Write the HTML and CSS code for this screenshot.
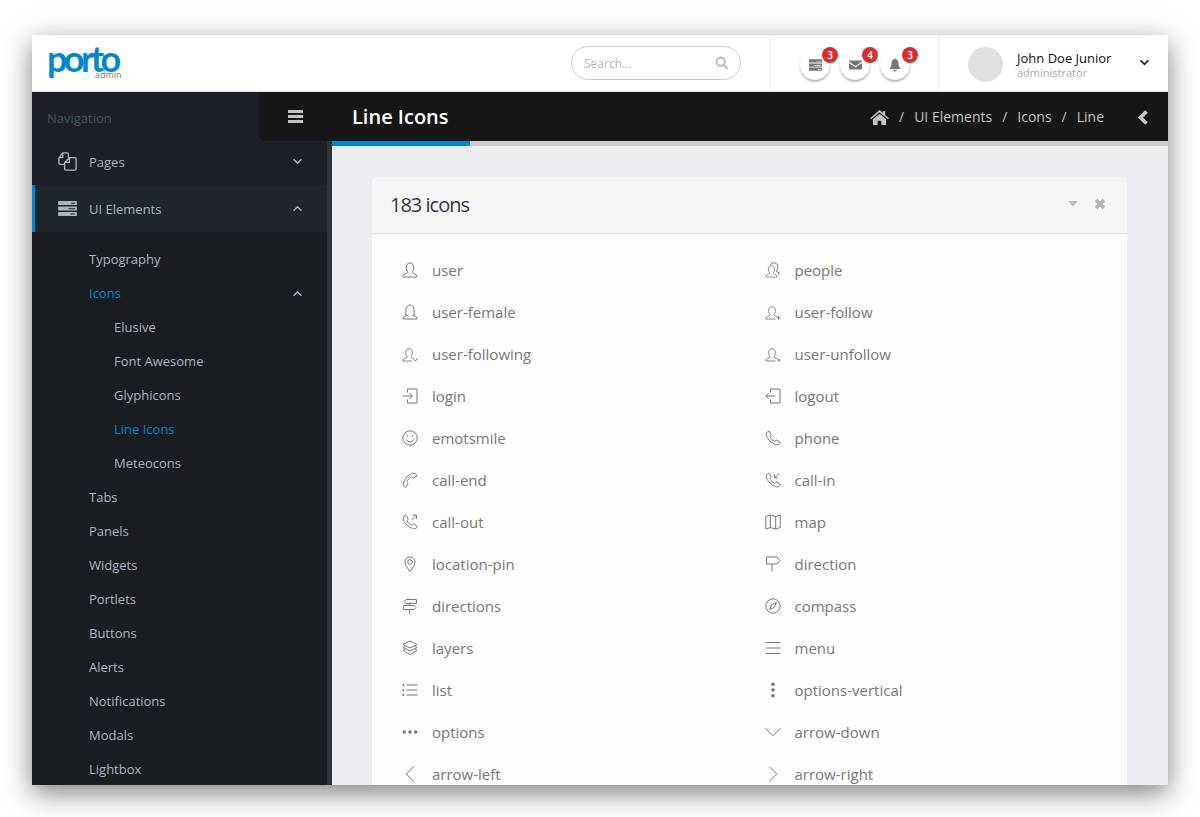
FILE: index.html
```html
<!DOCTYPE html>
<html lang="en">
<head>
<meta charset="utf-8">
<title>Line Icons</title>
<link rel="stylesheet" href="styles.css">
</head>
<body>
<svg class="sprite" xmlns="http://www.w3.org/2000/svg">
  <symbol id="i-user" viewBox="0 0 16 16"><path id="usr" d="M1 15v-1.300c0-1 3.500-2 4.700-3 .5-.5-.4-1-1-2.500C4.300 7.200 4.200 6 4.200 5c0-2.500 1.600-4 3.800-4s3.800 1.500 3.800 4c0 1-.1 2.200-.5 3.200-.6 1.500-1.500 2-1 2.500 1.200 1 4.700 2 4.700 3V15z"/></symbol>
  <symbol id="i-people" viewBox="0 0 16 16"><g transform="translate(0 3) scale(.8)"><path d="M1 15v-1.300c0-1 3.500-2 4.700-3 .5-.5-.4-1-1-2.500C4.300 7.200 4.200 6 4.200 5c0-2.500 1.600-4 3.800-4s3.800 1.500 3.800 4c0 1-.1 2.200-.5 3.200-.6 1.500-1.500 2-1 2.500 1.200 1 4.700 2 4.700 3V15z"/></g><path d="M5.500 3C6 1.600 7.200.8 9 .8c2.300 0 3.800 1.600 3.800 3.800 0 1-.2 2-.6 2.900-.4 1-1 1.500-.7 1.900.6.600 2 1.100 2.800 1.600-.1.700-.5 1-1.300 1.200"/></symbol>
  <symbol id="i-female" viewBox="0 0 16 16"><path d="M1 15v-1.200c0-1.100 3.200-1.600 4.300-2.600-.9 0-1.800-.3-2.200-.7.800-1 1-2.800 1-5.300C4.100 2.700 5.800 1 8 1s3.900 1.700 3.900 4.200c0 2.500.2 4.300 1 5.300-.4.4-1.300.7-2.200.7 1.100 1 4.300 1.500 4.300 2.600V15z"/></symbol>
  <symbol id="i-follow" viewBox="0 0 16 16"><g transform="translate(0 1.800) scale(.88)"><path d="M1 15v-1.300c0-1 3.500-2 4.700-3 .5-.5-.4-1-1-2.500C4.300 7.200 4.200 6 4.200 5c0-2.500 1.600-4 3.800-4s3.800 1.500 3.800 4c0 1-.1 2.200-.5 3.200-.6 1.500-1.500 2-1 2.500 .8.700 2.600 1.400 3.700 2M1 15h11"/></g><path d="M13.500 12v3.500M11.800 13.800h3.500"/></symbol>
  <symbol id="i-following" viewBox="0 0 16 16"><g transform="translate(0 1.800) scale(.88)"><path d="M1 15v-1.300c0-1 3.500-2 4.700-3 .5-.5-.4-1-1-2.500C4.300 7.200 4.200 6 4.200 5c0-2.500 1.600-4 3.800-4s3.800 1.500 3.800 4c0 1-.1 2.200-.5 3.200-.6 1.500-1.500 2-1 2.500 .8.700 2.600 1.400 3.700 2M1 15h10.500"/></g><path d="M12 13.400l1.400 1.700 1.900-2.700"/></symbol>
  <symbol id="i-unfollow" viewBox="0 0 16 16"><g transform="translate(0 1.800) scale(.88)"><path d="M1 15v-1.300c0-1 3.500-2 4.700-3 .5-.5-.4-1-1-2.500C4.300 7.200 4.200 6 4.200 5c0-2.500 1.600-4 3.800-4s3.800 1.500 3.800 4c0 1-.1 2.200-.5 3.200-.6 1.500-1.500 2-1 2.500 .8.700 2.600 1.400 3.700 2M1 15h11"/></g><path d="M12.500 12.800l2.800 2.700M15.300 12.800l-2.800 2.700"/></symbol>
  <symbol id="i-login" viewBox="0 0 16 16"><path d="M5.500 4.500V1h9.500v14H5.500v-3.500"/><path d="M.5 8h10M7.500 5l3 3-3 3"/></symbol>
  <symbol id="i-logout" viewBox="0 0 16 16"><path d="M5.500 4.500V1h9.500v14H5.500v-3.500"/><path d="M10.500 8H.8M3.800 5l-3 3 3 3"/></symbol>
  <symbol id="i-smile" viewBox="0 0 16 16"><circle cx="8" cy="8" r="7.200"/><circle cx="5.500" cy="6" r=".8" class="solid"/><circle cx="10.500" cy="6" r=".8" class="solid"/><path d="M4.500 9.500c.7 1.600 2 2.400 3.500 2.400s2.800-.8 3.500-2.400"/></symbol>
  <symbol id="i-phone" viewBox="0 0 16 16"><path d="M3.800 1 6 4.300c.3.500.1 1-.4 1.500-.6.500-.6 1-.2 1.700.9 1.500 1.900 2.500 3.400 3.400.7.400 1.200.4 1.700-.2.500-.6 1-.8 1.500-.5l3.300 2.200c-.5 1.700-2.100 2.800-3.900 2.300C6 12.800 3 9.800 1.400 5.700 .8 3.800 2 1.600 3.800 1z"/></symbol>
  <symbol id="i-callend" viewBox="0 0 16 16"><g transform="rotate(90 8 8)"><path d="M3.800 1 6 4.300c.3.500.1 1-.4 1.500-.6.500-.6 1-.2 1.700.9 1.500 1.900 2.500 3.400 3.400.7.400 1.200.4 1.700-.2.500-.6 1-.8 1.500-.5l3.300 2.200c-.5 1.700-2.100 2.800-3.900 2.300C6 12.800 3 9.800 1.400 5.700 .8 3.800 2 1.600 3.800 1z"/></g></symbol>
  <symbol id="i-callin" viewBox="0 0 16 16"><path d="M3.800 1 6 4.300c.3.500.1 1-.4 1.500-.6.500-.6 1-.2 1.700.9 1.500 1.900 2.500 3.400 3.400.7.400 1.200.4 1.700-.2.500-.6 1-.8 1.500-.5l3.300 2.200c-.5 1.700-2.100 2.800-3.900 2.300C6 12.800 3 9.800 1.400 5.700 .8 3.800 2 1.600 3.800 1z"/><path d="M14.500 1 9.500 6M9.500 2.500V6H13"/></symbol>
  <symbol id="i-callout" viewBox="0 0 16 16"><path d="M3.800 1 6 4.300c.3.500.1 1-.4 1.500-.6.500-.6 1-.2 1.700.9 1.500 1.900 2.500 3.400 3.400.7.400 1.200.4 1.700-.2.500-.6 1-.8 1.500-.5l3.300 2.200c-.5 1.700-2.100 2.800-3.900 2.300C6 12.800 3 9.800 1.400 5.700 .8 3.800 2 1.600 3.800 1z"/><path d="M9 6.500l5.500-5.500M10.500 1h4v4"/></symbol>
  <symbol id="i-map" viewBox="0 0 16 16"><path d="M.8 2.500 5.300 1l5.400 1.500L15.200 1v12.500L10.700 15l-5.400-1.500L.8 15zM5.300 1v12.500M10.700 2.500V15"/></symbol>
  <symbol id="i-pin" viewBox="0 0 16 16"><path d="M8 15.500C5.500 12 3 9.300 3 6a5 5 0 0 1 10 0c0 3.300-2.500 6-5 9.500z"/><circle cx="8" cy="6" r="2.300"/></symbol>
  <symbol id="i-direction" viewBox="0 0 16 16"><path d="M1.500 1h10.500l3 3.500-3 3.500H1.500zM7 8v7.500"/></symbol>
  <symbol id="i-directions" viewBox="0 0 16 16"><path d="M4 1.500h10.500v4H4L2 3.500z"/><path d="M1.500 7.500h10.500l2 2-2 2H1.500zM7.500 .5v1M7.500 5.500v2M7.500 11.500v4"/></symbol>
  <symbol id="i-compass" viewBox="0 0 16 16"><circle cx="8" cy="8" r="7.200"/><path d="M11.500 4.500 9.300 9.300 4.500 11.500 6.700 6.700z"/></symbol>
  <symbol id="i-layers" viewBox="0 0 16 16"><path d="M8 1l7 3.500L8 8 1 4.500z"/><path d="M2.800 6.300 1 7.500 8 11l7-3.500-1.800-1.200"/><path d="M2.800 9.300 1 10.500 8 14.500l7-4-1.800-1.200"/></symbol>
  <symbol id="i-menu" viewBox="0 0 16 16"><path d="M.5 2.500h15M.5 8h15M.5 13.500h15"/></symbol>
  <symbol id="i-list" viewBox="0 0 16 16"><path d="M4.500 3h11M4.500 8h11M4.500 13h11"/><path class="thick" d="M.6 3h1.600M.6 8h1.600M.6 13h1.600"/></symbol>
  <symbol id="i-vert" viewBox="0 0 16 16"><circle cx="8" cy="2.300" r="1.800" class="solid"/><circle cx="8" cy="8" r="1.800" class="solid"/><circle cx="8" cy="13.700" r="1.800" class="solid"/></symbol>
  <symbol id="i-horiz" viewBox="0 0 16 16"><circle cx="2.300" cy="8" r="1.800" class="solid"/><circle cx="8" cy="8" r="1.800" class="solid"/><circle cx="13.700" cy="8" r="1.800" class="solid"/></symbol>
  <symbol id="i-adown" viewBox="0 0 16 16"><path d="M.5 4.200 8 11.700l7.500-7.500"/></symbol>
  <symbol id="i-aleft" viewBox="0 0 16 16"><path d="M11.800.5 4.300 8l7.500 7.500"/></symbol>
  <symbol id="i-aright" viewBox="0 0 16 16"><path d="M4.200.5 11.700 8l-7.500 7.500"/></symbol>
</svg>

<div class="window">
  <header class="topbar">
    <div class="logo">
      <span class="logo-word">porto</span>
      <span class="logo-sub">admin</span>
    </div>
    <div class="search">
      <span class="search-text">Search...</span>
      <svg class="search-icon" viewBox="0 0 16 16"><circle cx="6.500" cy="6.500" r="4.800"/><path d="M10 10l4.500 4.500"/></svg>
    </div>
    <div class="notes">
      <div class="note">
        <svg class="note-icon" viewBox="0 0 20 18"><path d="M0 0h20v5H13v-1.200h5v-1h-5V5H0zM0 6.500h20v5H9V10h9V9H9v2.500H0zM0 13h20v5H14v-1.700h4v-1h-4V18H0z"/></svg>
        <span class="badge">3</span>
      </div>
      <div class="note">
        <svg class="note-icon" viewBox="0 0 20 16"><path d="M0 2.800V2a1 1 0 0 1 1-1h18a1 1 0 0 1 1 1v.8L10 9.500zM0 4.800V14a1 1 0 0 0 1 1h18a1 1 0 0 0 1-1V4.800L10 11.500z"/></svg>
        <span class="badge">4</span>
      </div>
      <div class="note">
        <svg class="note-icon bell" viewBox="0 0 16 16"><path d="M8 .5c.7 0 1 .5 1 1 2 .5 3 2 3 4 0 4 1 5.500 2.500 7h-13C3 11 4 9.500 4 5.500c0-2 1-3.500 3-4 0-.5.300-1 1-1zM6 13.500h4c0 1.200-.9 2-2 2s-2-.8-2-2z"/></svg>
        <span class="badge">3</span>
      </div>
    </div>
    <div class="userbox">
      <div class="avatar"></div>
      <div class="user-text">
        <span class="user-name">John Doe Junior</span>
        <span class="user-role">administrator</span>
      </div>
      <svg class="user-chev" viewBox="0 0 12 8"><path d="M1.500 1.500 6 6l4.500-4.500"/></svg>
    </div>
  </header>

  <div class="frame">
    <aside class="sidebar">
      <div class="nav-title">Navigation</div>
      <button class="toggle" type="button" aria-label="Toggle"><span></span><span></span><span></span></button>
      <div class="nav-row">
        <svg class="nav-icon" viewBox="0 0 20 20"><path d="M6.500 13H2.500A1.500 1.500 0 0 1 1 11.500V6l4-5h4.500A1.500 1.500 0 0 1 11 2.500V6"/><path d="M5 1v5H1"/><path d="M8 19a1 1 0 0 1-1-1v-7l5-5h6a1 1 0 0 1 1 1v11a1 1 0 0 1-1 1zM12 6v5H7"/></svg>
        <span class="nav-label">Pages</span>
        <svg class="chev" viewBox="0 0 12 8"><path d="M1.500 1.500 6 6l4.500-4.500"/></svg>
      </div>
      <div class="nav-row active">
        <svg class="nav-icon filled" viewBox="0 0 20 16"><path d="M0 0h20v4.300H14v-1.500h4v-1h-4v2.500H0zM0 5.800h20v4.400H11V8.700h7v-1h-7v2.500H0zM0 11.700h20V16H13v-1.700h5v-1h-5V16H0z"/></svg>
        <span class="nav-label">UI Elements</span>
        <svg class="chev" viewBox="0 0 12 8"><path d="M1.500 6.500 6 2l4.500 4.500"/></svg>
      </div>
      <ul class="subnav">
        <li class="sub">Typography</li>
        <li class="sub current">Icons<svg class="chev" viewBox="0 0 12 8"><path d="M1.500 6.500 6 2l4.500 4.500"/></svg></li>
        <li class="sub deep">Elusive</li>
        <li class="sub deep">Font Awesome</li>
        <li class="sub deep">Glyphicons</li>
        <li class="sub deep current">Line Icons</li>
        <li class="sub deep">Meteocons</li>
        <li class="sub">Tabs</li>
        <li class="sub">Panels</li>
        <li class="sub">Widgets</li>
        <li class="sub">Portlets</li>
        <li class="sub">Buttons</li>
        <li class="sub">Alerts</li>
        <li class="sub">Notifications</li>
        <li class="sub">Modals</li>
        <li class="sub">Lightbox</li>
      </ul>
    </aside>

    <main class="main">
      <div class="page-head">
        <h1 class="page-title">Line Icons</h1>
        <div class="crumbs">
          <svg class="home" viewBox="0 0 20 16"><path d="M10 0l3.500 3V1.200h2.500V5.200l4 3.500-1 1.200L10 2.500 1 9.900 0 8.700zM3 9.800 10 4l7 5.800V16h-5v-4.500H8V16H3z"/></svg>
          <span class="slash">/</span><span>UI Elements</span>
          <span class="slash">/</span><span>Icons</span>
          <span class="slash">/</span><span>Line</span>
          <svg class="back" viewBox="0 0 12 16"><path d="M9.500 2 3.500 8l6 6"/></svg>
        </div>
      </div>
      <div class="content">
        <section class="card">
          <div class="card-head">
            <h2 class="card-title">183 icons</h2>
            <div class="card-actions">
              <svg class="caret" viewBox="0 0 10 6"><path d="M0 0h10L5 5.500z"/></svg>
              <svg class="close" viewBox="0 0 12 12"><path d="M2 2l8 8M10 2l-8 8"/></svg>
            </div>
          </div>
          <div class="card-body">
            <div class="ico"><svg><use href="#i-user"/></svg><span>user</span></div>
            <div class="ico"><svg><use href="#i-people"/></svg><span>people</span></div>
            <div class="ico"><svg><use href="#i-female"/></svg><span>user-female</span></div>
            <div class="ico"><svg><use href="#i-follow"/></svg><span>user-follow</span></div>
            <div class="ico"><svg><use href="#i-following"/></svg><span>user-following</span></div>
            <div class="ico"><svg><use href="#i-unfollow"/></svg><span>user-unfollow</span></div>
            <div class="ico"><svg><use href="#i-login"/></svg><span>login</span></div>
            <div class="ico"><svg><use href="#i-logout"/></svg><span>logout</span></div>
            <div class="ico"><svg><use href="#i-smile"/></svg><span>emotsmile</span></div>
            <div class="ico"><svg><use href="#i-phone"/></svg><span>phone</span></div>
            <div class="ico"><svg><use href="#i-callend"/></svg><span>call-end</span></div>
            <div class="ico"><svg><use href="#i-callin"/></svg><span>call-in</span></div>
            <div class="ico"><svg><use href="#i-callout"/></svg><span>call-out</span></div>
            <div class="ico"><svg><use href="#i-map"/></svg><span>map</span></div>
            <div class="ico"><svg><use href="#i-pin"/></svg><span>location-pin</span></div>
            <div class="ico"><svg><use href="#i-direction"/></svg><span>direction</span></div>
            <div class="ico"><svg><use href="#i-directions"/></svg><span>directions</span></div>
            <div class="ico"><svg><use href="#i-compass"/></svg><span>compass</span></div>
            <div class="ico"><svg><use href="#i-layers"/></svg><span>layers</span></div>
            <div class="ico"><svg><use href="#i-menu"/></svg><span>menu</span></div>
            <div class="ico"><svg><use href="#i-list"/></svg><span>list</span></div>
            <div class="ico"><svg><use href="#i-vert"/></svg><span>options-vertical</span></div>
            <div class="ico"><svg><use href="#i-horiz"/></svg><span>options</span></div>
            <div class="ico"><svg><use href="#i-adown"/></svg><span>arrow-down</span></div>
            <div class="ico"><svg><use href="#i-aleft"/></svg><span>arrow-left</span></div>
            <div class="ico"><svg><use href="#i-aright"/></svg><span>arrow-right</span></div>
          </div>
        </section>
      </div>
    </main>
  </div>
</div>
</body>
</html>
```
FILE: styles.css
```css
* { box-sizing: border-box; }
html, body { margin: 0; height: 100%; background: #fff; overflow: hidden; }
body { padding: 35px 32px 32px; font-family: "Open Sans", "Liberation Sans", sans-serif; }
.sprite { width: 0; height: 0; position: absolute; }

.window {
  width: 1136px;
  height: 750px;
  display: flex;
  flex-direction: column;
  overflow: hidden;
  background: #ecedf0;
  box-shadow: 0 8px 26px rgba(0, 0, 0, .5);
}

/* top bar */
.topbar {
  height: 57px;
  flex: none;
  display: flex;
  align-items: stretch;
  background: #fff;
  border-bottom: 1px solid #e6e6e6;
}
.logo { width: 539px; padding: 4px 0 0 15px; position: relative; flex: none; }
.logo-word {
  display: block;
  font-family: "Lato", sans-serif;
  font-weight: 700;
  font-size: 36px;
  line-height: 38px;
  letter-spacing: -3.600px;
  color: #0088cc;
}
.logo-sub {
  position: absolute;
  top: 34px;
  left: 63px;
  font-size: 9px;
  line-height: 12px;
  color: #777;
}
.search {
  width: 170px;
  height: 34px;
  margin-top: 11px;
  display: flex;
  align-items: center;
  justify-content: space-between;
  padding: 0 11px 0 12px;
  border: 1px solid #ccc;
  border-radius: 17px;
}
.search-text { font-size: 12px; color: #b5b5b5; }
.search-icon { width: 14px; height: 14px; fill: none; stroke: #c4c4c4; stroke-width: 2.600; }
.notes {
  width: 169px;
  margin-left: 28px;
  padding: 15px 0 0 29px;
  display: flex;
  gap: 10px;
  border-left: 2px solid #f4f4f4;
}
.note {
  position: relative;
  width: 30px;
  height: 30px;
  border-radius: 50%;
  background: #fff;
  display: flex;
  align-items: center;
  justify-content: center;
  box-shadow: 0 2px 2px rgba(0, 0, 0, .28);
}
.note-icon { width: 13px; height: 12px; fill: #777; }
.note-icon.bell { width: 14px; height: 14px; }
.badge {
  position: absolute;
  top: -3px;
  right: -8px;
  width: 16px;
  height: 16px;
  border-radius: 50%;
  background: #d2312d;
  color: #fff;
  font-size: 10px;
  font-weight: 600;
  line-height: 16px;
  text-align: center;
}
.userbox {
  flex: 1;
  display: flex;
  align-items: flex-start;
  padding: 12px 0 0 28px;
  border-left: 2px solid #f4f4f4;
}
.avatar { width: 35px; height: 35px; flex: none; border-radius: 50%; background: #e0e0e0; }
.user-text { display: flex; flex-direction: column; margin-left: 14px; padding-top: 3px; width: 122px; }
.user-name { font-size: 13px; line-height: 16px; color: #111; }
.user-role { font-size: 11px; line-height: 14px; color: #aaa; }
.user-chev { width: 11px; height: 7px; margin-top: 12px; fill: none; stroke: #1d2127; stroke-width: 2; }

/* frame */
.frame { flex: 1; min-height: 0; display: flex; }

/* sidebar */
.sidebar {
  width: 300px;
  flex: none;
  position: relative;
  background: #1d2127;
  border-right: 5px solid #2e3239;
  display: flex;
  flex-direction: column;
}
.nav-title {
  height: 46px;
  flex: none;
  padding: 17px 0 0 15px;
  font-size: 13px;
  line-height: 18px;
  color: #465162;
}
.toggle {
  position: absolute;
  top: 0;
  right: -5px;
  z-index: 2;
  width: 73px;
  height: 49px;
  padding: 0;
  border: 0;
  border-radius: 0 0 0 5px;
  background: #171717;
  display: flex;
  flex-direction: column;
  align-items: center;
  justify-content: center;
  gap: 2.500px;
}
.toggle span { display: block; width: 15px; height: 2.500px; background: #c3c3c3; }
.nav-row {
  height: 47px;
  flex: none;
  display: flex;
  align-items: center;
  padding: 0 24px 0 26px;
  color: #abb4be;
}
.nav-row.active { background: #21262d; box-shadow: inset 3px 0 0 #0088cc; }
.nav-icon { width: 19px; height: 19px; flex: none; fill: none; stroke: #abb4be; stroke-width: 1.400; }
.nav-icon.filled { fill: #abb4be; stroke: none; height: 15px; }
.nav-label { flex: 1; margin-left: 12px; font-size: 13px; }
.chev { width: 11px; height: 7px; flex: none; fill: none; stroke: #abb4be; stroke-width: 1.500; }
.subnav { margin: 0; padding: 10px 0 0; list-style: none; background: #1a1d22; flex: 1 0 auto; }
.sub {
  height: 34px;
  display: flex;
  align-items: center;
  justify-content: space-between;
  padding: 0 24px 0 57px;
  font-size: 13px;
  color: #abb4be;
}
.sub.deep { padding-left: 82px; }
.sub.current { color: #0088cc; }

/* page header */
.main { flex: 1; min-width: 0; display: flex; flex-direction: column; }
.page-head {
  height: 54px;
  flex: none;
  display: flex;
  justify-content: space-between;
  background: #171717;
  border-bottom: 5px solid #ccc;
}
.page-title {
  margin: 0 0 -5px;
  padding: 0 21px 0 20px;
  height: 54px;
  border-bottom: 5px solid #0088cc;
  font-size: 20px;
  font-weight: 600;
  line-height: 49px;
  color: #fff;
}
.crumbs { display: flex; align-items: center; font-size: 14px; color: #c3c3c3; padding-right: 19px; }
.home { width: 19px; height: 15px; fill: #c3c3c3; margin: 2px 10px 0 0; }
.slash { margin: 0 10px; }
.crumbs .slash:first-of-type { margin-left: 0; }
.back { width: 12px; height: 17px; margin: 2px 0 0 33px; fill: none; stroke: #c3c3c3; stroke-width: 3.800; }

/* content */
.content { flex: 1; min-height: 0; padding: 31px 41px 0 40px; overflow: hidden; }
.card { background: #fdfdfd; border-radius: 5px 5px 0 0; }
.card-head {
  height: 57px;
  display: flex;
  align-items: center;
  justify-content: space-between;
  padding: 0 21px 2px 18px;
  background: #f6f6f6;
  border-bottom: 1px solid #dadada;
  border-radius: 5px 5px 0 0;
}
.card-title { margin: 0; font-size: 20px; font-weight: 400; letter-spacing: -1px; color: #33353f; }
.card-actions { display: flex; align-items: center; gap: 16px; }
.caret { width: 10px; height: 6px; fill: #bbb; }
.close { width: 12px; height: 12px; fill: none; stroke: #b4b4b4; stroke-width: 3.600; }
.card-body {
  display: grid;
  grid-template-columns: 1fr 1fr;
  padding: 15px 15px 0;
}
.ico {
  height: 42px;
  display: flex;
  align-items: center;
  padding-left: 15px;
  font-size: 15px;
  color: #777;
}
.ico svg {
  width: 16px;
  height: 16px;
  flex: none;
  margin-right: 14px;
  fill: none;
  stroke: #777;
  stroke-width: 1;
  overflow: visible;
}
.solid { fill: #777; stroke: none; }
.thick { stroke-width: 1.800; }
```
